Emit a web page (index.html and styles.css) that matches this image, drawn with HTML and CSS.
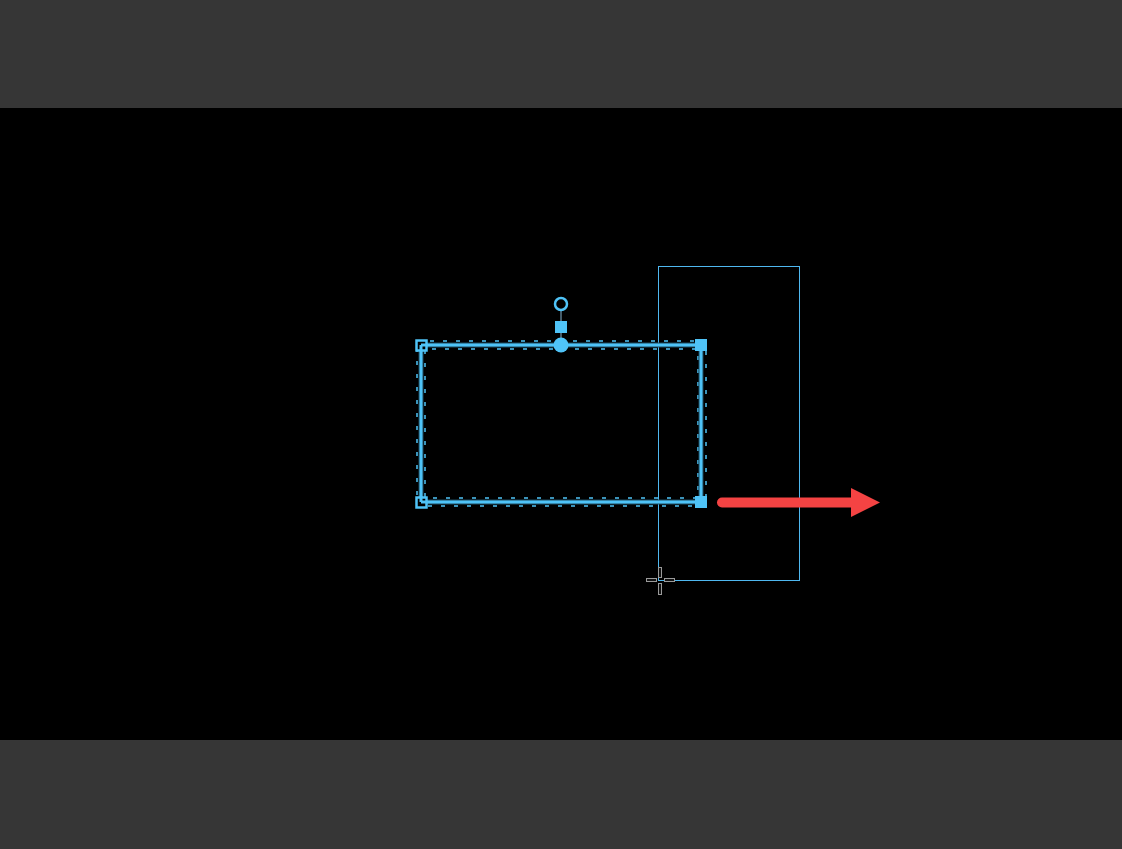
FILE: index.html
```html
<!DOCTYPE html>
<html>
<head>
<meta charset="utf-8">
<link rel="stylesheet" href="styles.css">
</head>
<body>
<div class="app">
  <div class="bar"></div>
  <div class="canvas">
    <svg class="stage" width="1122" height="632" viewBox="0 108 1122 632" xmlns="http://www.w3.org/2000/svg">
      <!-- thin guide rectangle -->
      <rect x="658.5" y="266.5" width="141" height="314" fill="none" stroke="#4fb8f0" stroke-width="1"/>
      <!-- dashed outer/inner outlines -->
      <g fill="none" stroke="#4fc3f7" stroke-width="1.5" stroke-dasharray="4 9">
        <rect x="417" y="341" width="289" height="165"/>
        <rect x="425" y="349" width="273" height="149" stroke-dashoffset="6"/>
      </g>
      <!-- main selection outline -->
      <rect x="421" y="345" width="280" height="157" fill="none" stroke="#1d4a5e" stroke-width="5"/>
      <rect x="421" y="345" width="280" height="157" fill="none" stroke="#4fc3f7" stroke-width="3"/>
      <!-- rotation handle -->
      <line x1="561" y1="310" x2="561" y2="322" stroke="#5b7a8c" stroke-width="1.5"/>
      <circle cx="561" cy="304" r="6" fill="none" stroke="#4fc3f7" stroke-width="2.5"/>
      <rect x="555" y="321" width="12" height="12" fill="#4fc3f7"/>
      <line x1="561" y1="333" x2="561" y2="340" stroke="#5b7a8c" stroke-width="1.5"/>
      <circle cx="561" cy="345" r="7.5" fill="#4fc3f7"/>
      <!-- corner handles -->
      <rect x="416.5" y="340.5" width="10" height="10" fill="#000" stroke="#4fc3f7" stroke-width="2.5"/>
      <rect x="416.5" y="497.5" width="10" height="10" fill="#000" stroke="#4fc3f7" stroke-width="2.5"/>
      <path d="M421 345 H427 M421 345 V351 M421 502 H427 M421 502 V496" stroke="#4fc3f7" stroke-width="3"/>
      <rect x="695" y="339" width="12" height="12" fill="#4fc3f7"/>
      <rect x="695" y="496" width="12" height="12" fill="#4fc3f7"/>
      <!-- red arrow -->
      <line x1="722" y1="502.5" x2="854" y2="502.5" stroke="#f44343" stroke-width="10" stroke-linecap="round"/>
      <polygon points="851,488 880,502.5 851,517" fill="#f44343"/>
      <!-- crosshair cursor -->
      <g fill="#111" stroke="#9a9a9a" stroke-width="1">
        <rect x="658.5" y="567.5" width="3" height="10"/>
        <rect x="658.5" y="583.5" width="3" height="11"/>
        <rect x="646.5" y="578.5" width="10" height="3"/>
        <rect x="664.5" y="578.5" width="10" height="3"/>
      </g>
    </svg>
  </div>
  <div class="bar bottom"></div>
</div>
</body>
</html>
```
FILE: styles.css
```css
html, body {
  margin: 0;
  padding: 0;
  background: #000;
  font-family: "Liberation Sans", Arial, sans-serif;
}
.app {
  width: 1122px;
  height: 849px;
  display: flex;
  flex-direction: column;
  overflow: hidden;
}
.bar {
  height: 108px;
  flex: 0 0 108px;
  background: #363636;
}
.bar.bottom {
  height: 109px;
  flex: 0 0 109px;
}
.canvas {
  flex: 0 0 632px;
  height: 632px;
  background: #000;
}
.stage {
  display: block;
}
```
